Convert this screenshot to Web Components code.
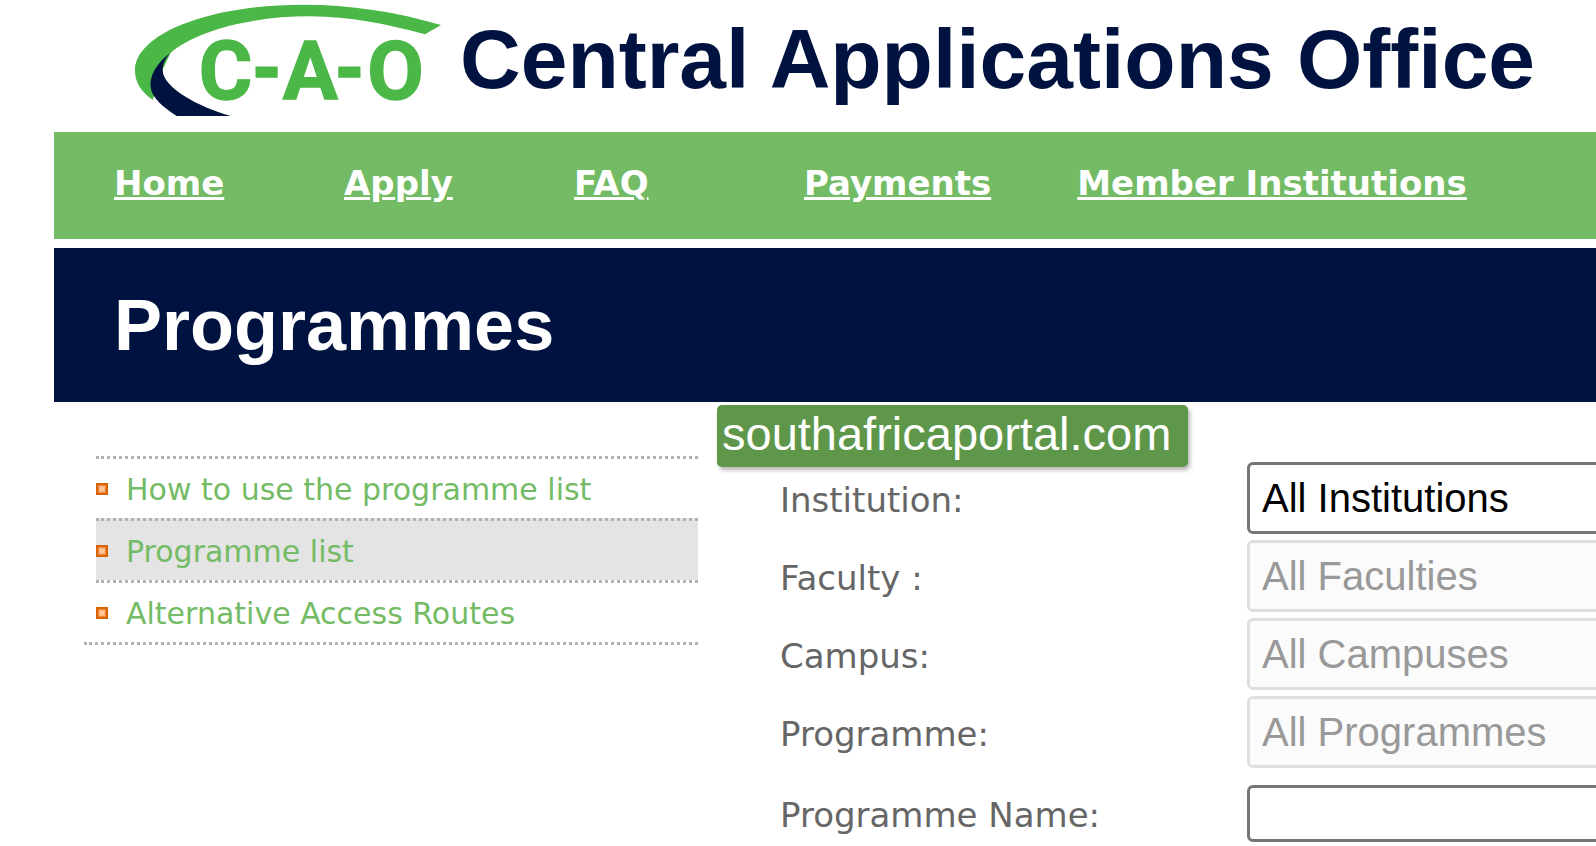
<!DOCTYPE html>
<html lang="en">
<head>
  <meta charset="utf-8">
  <title>Central Applications Office - Programmes</title>
  <style>
    body {
      margin: 0;
      background: #fff;
      color: #666;
      font-family: Verdana, "DejaVu Sans", sans-serif;
      overflow-x: hidden;
    }
  </style>
</head>
<body>
  <cao-page>
    <cao-header slot="header">Central Applications Office</cao-header>
    <cao-nav slot="nav">
      <a href="#home">Home</a>
      <a href="#apply">Apply</a>
      <a href="#faq">FAQ</a>
      <a href="#payments">Payments</a>
      <a href="#members">Member Institutions</a>
    </cao-nav>
    <cao-banner slot="banner">Programmes</cao-banner>
    <cao-menu slot="menu">
      <cao-menu-item href="#how">How to use the programme list</cao-menu-item>
      <cao-menu-item href="#list" active>Programme list</cao-menu-item>
      <cao-menu-item href="#routes">Alternative Access Routes</cao-menu-item>
    </cao-menu>
    <cao-badge slot="badge">southafricaportal.com</cao-badge>
    <cao-field label="Institution:" option="All Institutions"></cao-field>
    <cao-field label="Faculty :" option="All Faculties" disabled></cao-field>
    <cao-field label="Campus:" option="All Campuses" disabled></cao-field>
    <cao-field label="Programme:" option="All Programmes" disabled></cao-field>
    <cao-field label="Programme Name:" type="text"></cao-field>
  </cao-page>

  <script>
    class CaoPage extends HTMLElement {
      constructor() {
        super();
        this.attachShadow({ mode: "open" });
      }

      connectedCallback() {
        this.shadowRoot.innerHTML = `
          <style>
            :host {
              display: block;
              padding-left: 54px;
              overflow: hidden;
            }

            .columns {
              display: flex;
              align-items: flex-start;
            }

            aside {
              flex: 0 0 614px;
              padding: 54px 0 0 30px;
            }

            main {
              position: relative;
              flex: 1;
              min-width: 0;
              padding: 60px 0 4px 82px;
            }

            form {
              display: flex;
              flex-direction: column;
              gap: 6px;
            }

            /* sits over the top of the form */
            ::slotted(cao-badge) {
              position: absolute;
              top: 3px;
              left: 19px;
            }

            ::slotted(cao-field[type="text"]) {
              margin-top: 11px;
            }
          </style>
          <slot name="header"></slot>
          <slot name="nav"></slot>
          <slot name="banner"></slot>
          <div class="columns">
            <aside><slot name="menu"></slot></aside>
            <main>
              <slot name="badge"></slot>
              <form><slot></slot></form>
            </main>
          </div>
        `;
      }
    }

    class CaoHeader extends HTMLElement {
      constructor() {
        super();
        this.attachShadow({ mode: "open" });
      }

      connectedCallback() {
        this.shadowRoot.innerHTML = `
          <style>
            :host {
              display: flex;
              height: 132px;
              padding-left: 66px;
            }

            svg {
              flex: none;
              width: 340px;
              height: 130px;
            }

            text {
              font: bold 246px Roboto, "Liberation Sans", sans-serif;
              stroke: #4bb747;
              stroke-width: 4px;
            }

            .dash {
              font-family: "Liberation Sans", Arial, sans-serif;
            }

            h1 {
              margin: 0;
              color: #00123f;
              font: bold 84px/118px "Liberation Sans", Arial, sans-serif;
              white-space: nowrap;
              font-variant-ligatures: none;
            }
          </style>
          <svg viewBox="0 0 1020 390" role="img" aria-label="CAO logo">
            <path fill="#4bb747" d="M963 75 C830 35 690 14 550 14 C270 14 45 100 45 212 C45 248 65 276 98 300 L125 215 L152 158 C230 92 390 49 570 49 C690 50 800 72 915 103 Z"/>
            <path fill="#00123f" d="M152 158 C108 190 88 228 92 262 C96 295 130 322 170 348 L332 348 C240 322 128 264 128 210 C128 190 138 172 152 158 Z"/>
            <text y="298" fill="#4bb747"><tspan x="236">C</tspan><tspan class="dash" x="399" y="278">-</tspan><tspan x="488" y="298">A</tspan><tspan class="dash" x="647" y="278">-</tspan><tspan x="742" y="298">O</tspan></text>
          </svg>
          <h1><slot></slot></h1>
        `;
      }
    }

    class CaoNav extends HTMLElement {
      constructor() {
        super();
        this.attachShadow({ mode: "open" });
      }

      connectedCallback() {
        this.shadowRoot.innerHTML = `
          <style>
            nav {
              display: flex;
              height: 107px;
              padding-left: 60px;
              background: #74bb65;
            }

            ::slotted(a) {
              min-width: 144px;
              padding-right: 86px;
              color: #fff;
              font-size: 34px;
              font-weight: bold;
              line-height: 102px;
              text-decoration-thickness: 3px;
              text-underline-offset: 2px;
              white-space: nowrap;
            }
          </style>
          <nav><slot></slot></nav>
        `;
      }
    }

    class CaoBanner extends HTMLElement {
      constructor() {
        super();
        this.attachShadow({ mode: "open" });
      }

      connectedCallback() {
        this.shadowRoot.innerHTML = `
          <style>
            :host {
              display: block;
              margin-top: 9px;
              padding-left: 60px;
              background: #00123f;
            }

            h2 {
              margin: 0;
              color: #fff;
              font: bold 72px/154px "Liberation Sans", Arial, sans-serif;
            }
          </style>
          <h2><slot></slot></h2>
        `;
      }
    }

    class CaoMenu extends HTMLElement {
      constructor() {
        super();
        this.attachShadow({ mode: "open" });
      }

      connectedCallback() {
        this.shadowRoot.innerHTML = `
          <style>
            :host {
              display: block;
              padding-left: 12px;
              border-bottom: 3px dotted #b2b2b2;
            }
          </style>
          <nav><slot></slot></nav>
        `;
      }
    }

    class CaoMenuItem extends HTMLElement {
      constructor() {
        super();
        this.attachShadow({ mode: "open" });
      }

      connectedCallback() {
        this.shadowRoot.innerHTML = `
          <style>
            :host {
              display: flex;
              align-items: center;
              gap: 18px;
              height: 59px;
              border-top: 3px dotted #b2b2b2;
            }

            :host([active]) {
              background: #e4e4e4;
            }

            svg {
              flex: none;
              width: 12px;
              height: 12px;
            }

            a {
              padding-top: 2px;
              color: #74bb65;
              font-size: 30px;
              line-height: 57px;
              text-decoration: none;
              white-space: nowrap;
            }
          </style>
          <svg viewBox="0 0 12 12" shape-rendering="crispEdges" aria-hidden="true">
            <rect width="12" height="12" fill="#d86300"/>
            <rect x="2" y="2" width="8" height="8" fill="#f08a3c"/>
            <rect x="3" y="3" width="6" height="6" fill="#ffb27a"/>
            <rect x="4" y="4" width="4" height="4" fill="#ffc79a"/>
          </svg>
          <a href="${this.getAttribute("href")}"><slot></slot></a>
        `;
      }
    }

    class CaoBadge extends HTMLElement {
      constructor() {
        super();
        this.attachShadow({ mode: "open" });
      }

      connectedCallback() {
        this.shadowRoot.innerHTML = `
          <style>
            :host {
              padding: 0 17px 4px 5px;
              border-radius: 5px;
              background: #5e964a;
              box-shadow: 2px 3px 4px rgba(0, 0, 0, 0.3);
              color: #fff;
              font: 47px/58px "Liberation Sans", Arial, sans-serif;
              white-space: nowrap;
            }
          </style>
          <slot></slot>
        `;
      }
    }

    class CaoField extends HTMLElement {
      constructor() {
        super();
        this.attachShadow({ mode: "open" });
      }

      connectedCallback() {
        this.shadowRoot.innerHTML = `
          <style>
            :host {
              display: grid;
              grid-template-columns: 467px minmax(420px, 1fr);
              align-items: center;
            }

            label {
              padding-top: 4px;
              font-size: 34px;
              line-height: 53px;
              white-space: nowrap;
            }

            select,
            input {
              appearance: none;
              box-sizing: border-box;
              width: 100%;
              height: 72px;
              margin: 0;
              padding: 0 12px;
              border: 3px solid #767676;
              border-radius: 6px;
              background: #fff;
              color: #000;
              font: 40px "Liberation Sans", Arial, sans-serif;
            }

            input {
              height: 57px;
            }

            select:disabled {
              border-color: #dfdfdf;
              background: #fbfbfb;
              color: #999;
              opacity: 1;
            }
          </style>
          <label for="control">${this.getAttribute("label")}</label>
          ${this.control()}
        `;
      }

      control() {
        if (this.getAttribute("type") === "text") {
          return `<input id="control" type="text">`;
        }
        const disabled = this.hasAttribute("disabled") ? "disabled" : "";
        return `
          <select id="control" ${disabled}>
            <option>${this.getAttribute("option")}</option>
          </select>
        `;
      }
    }

    customElements.define("cao-page", CaoPage);
    customElements.define("cao-header", CaoHeader);
    customElements.define("cao-nav", CaoNav);
    customElements.define("cao-banner", CaoBanner);
    customElements.define("cao-menu", CaoMenu);
    customElements.define("cao-menu-item", CaoMenuItem);
    customElements.define("cao-badge", CaoBadge);
    customElements.define("cao-field", CaoField);
  </script>
</body>
</html>
